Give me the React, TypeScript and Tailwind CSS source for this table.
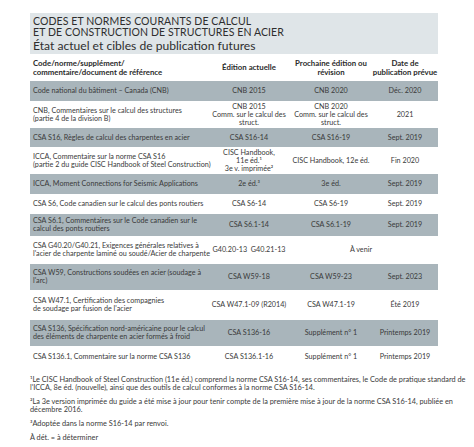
import React from "react";

type Row = {
  c1: React.ReactNode;
  c2?: React.ReactNode;
  c3?: React.ReactNode;
  c4?: React.ReactNode;
  span34?: React.ReactNode;
  dark: boolean;
  h: string;
};

const rows: Row[] = [
  { c1: "Code national du bâtiment – Canada (CNB)", c2: "CNB 2015", c3: "CNB 2020", c4: "Déc. 2020", dark: true, h: "h-[20px]" },
  {
    c1: (<>CNB, Commentaires sur le calcul des structures<br />(partie 4 de la division B)</>),
    c2: (<>CNB 2015<br />Comm. sur le calcul des<br />struct.</>),
    c3: (<>CNB 2020<br />Comm. sur le calcul des<br />struct.</>),
    c4: "2021",
    dark: false,
    h: "h-[27px]",
  },
  { c1: "CSA S16, Règles de calcul des charpentes en acier", c2: "CSA S16-14", c3: "CSA S16-19", c4: "Sept. 2019", dark: true, h: "h-[19px]" },
  {
    c1: (<>ICCA, Commentaire sur la norme CSA S16<br />(partie 2 du guide CISC Handbook of Steel Construction)</>),
    c2: (<>CISC Handbook,<br />11e éd.¹<br />3e v. imprimée²</>),
    c3: "CISC Handbook, 12e éd.",
    c4: "Fin 2020",
    dark: false,
    h: "h-[27px]",
  },
  { c1: "ICCA, Moment Connections for Seismic Applications", c2: "2e éd.³", c3: "3e éd.", c4: "Sept. 2019", dark: true, h: "h-[20px]" },
  { c1: "CSA S6, Code canadien sur le calcul des ponts routiers", c2: "CSA S6-14", c3: "CSA S6-19", c4: "Sept. 2019", dark: false, h: "h-[20px]" },
  {
    c1: (<>CSA S6.1, Commentaires sur le Code canadien sur le<br />calcul des ponts routiers</>),
    c2: "CSA S6.1-14", c3: "CSA S6.1-19", c4: "Sept. 2019", dark: true, h: "h-[22px]",
  },
  {
    c1: (<>CSA G40.20/G40.21, Exigences générales relatives à<br />l'acier de charpente laminé ou soudé/Acier de charpente</>),
    c2: (<>G40.20-13&nbsp;&nbsp;G40.21-13</>),
    span34: "À venir",
    dark: false,
    h: "h-[28px]",
  },
  {
    c1: (<>CSA W59, Constructions soudées en acier (soudage à<br />l'arc)</>),
    c2: "CSA W59-18", c3: "CSA W59-23", c4: "Sept. 2023", dark: true, h: "h-[26px]",
  },
  {
    c1: (<>CSA W47.1, Certification des compagnies<br />de soudage par fusion de l'acier</>),
    c2: "CSA W47.1-09 (R2014)", c3: "CSA W47.1-19", c4: "Été 2019", dark: false, h: "h-[30px]",
  },
  {
    c1: (<>CSA S136, Spécification nord-américaine pour le calcul<br />des éléments de charpente en acier formés à froid</>),
    c2: "CSA S136-16", c3: "Supplément n° 1", c4: "Printemps 2019", dark: true, h: "h-[26px]",
  },
  { c1: "CSA S136.1, Commentaire sur la norme CSA S136", c2: "CSA S136.1-16", c3: "Supplément n° 1", c4: "Printemps 2019", dark: false, h: "h-[22px]" },
];

export default function App() {
  return (
    <div
      className="w-[474px] h-[447px] bg-white text-[#3a3a3a] overflow-hidden"
      style={{ fontFamily: "Lato, 'Open Sans', sans-serif" }}
    >
      <div className="pt-[13px] pl-[30px]">
        <div className="w-[408px] h-[41px] bg-[#dfe5e8] px-[3px] pt-[3px] text-[#2e2e2e]">
          <div className="text-[10.5px] leading-[11px] tracking-[0.1px]">
            CODES ET NORMES COURANTS DE CALCUL
            <br />
            ET DE CONSTRUCTION DE STRUCTURES EN ACIER
          </div>
          <div className="text-[12.1px] leading-[14px] mt-[1px]">
            État actuel et cibles de publication futures
          </div>
        </div>

        <div className="w-[408px] grid grid-cols-[178px_82px_82px_66px] h-[27px] items-center font-bold text-[7.8px] leading-[8.5px] text-[#2b2b2b] whitespace-nowrap">
          <div className="pl-[3px]">
            Code/norme/supplément/
            <br />
            commentaire/document de référence
          </div>
          <div className="text-center">Édition actuelle</div>
          <div className="text-center">
            Prochaine édition ou
            <br />
            révision
          </div>
          <div className="text-center">
            Date de
            <br />
            publication prévue
          </div>
        </div>

        <div className="w-[408px] flex flex-col text-[7.2px] leading-[8px] whitespace-nowrap">
          {rows.map((r, i) => (
            <div
              key={i}
              className={`grid grid-cols-[178px_82px_82px_66px] items-center ${r.h} ${r.dark ? "bg-[#a9b5bb]" : "bg-white"}`}
            >
              <div className="pl-[3px]">{r.c1}</div>
              <div className="text-center">{r.c2}</div>
              {r.span34 ? (
                <div className="col-span-2 text-center pr-[6px]">{r.span34}</div>
              ) : (
                <>
                  <div className="text-center">{r.c3}</div>
                  <div className="text-center">{r.c4}</div>
                </>
              )}
            </div>
          ))}
        </div>

        <div className="w-[436px] mt-[8px] text-[7.35px] leading-[8px] flex flex-col gap-[6px]">
          <p>
            ¹Le CISC Handbook of Steel Construction (11e éd.) comprend la norme CSA S16-14, ses commentaires, le Code de pratique standard de
            l'ICCA, 8e éd. (nouvelle), ainsi que des outils de calcul conformes à la norme CSA S16-14.
          </p>
          <p>
            ²La 3e version imprimée du guide a été mise à jour pour tenir compte de la première mise à jour de la norme CSA S16-14, publiée en
            décembre 2016.
          </p>
          <p>³Adoptée dans la norme S16-14 par renvoi.</p>
          <p>À dét. = à déterminer</p>
        </div>
      </div>
    </div>
  );
}
